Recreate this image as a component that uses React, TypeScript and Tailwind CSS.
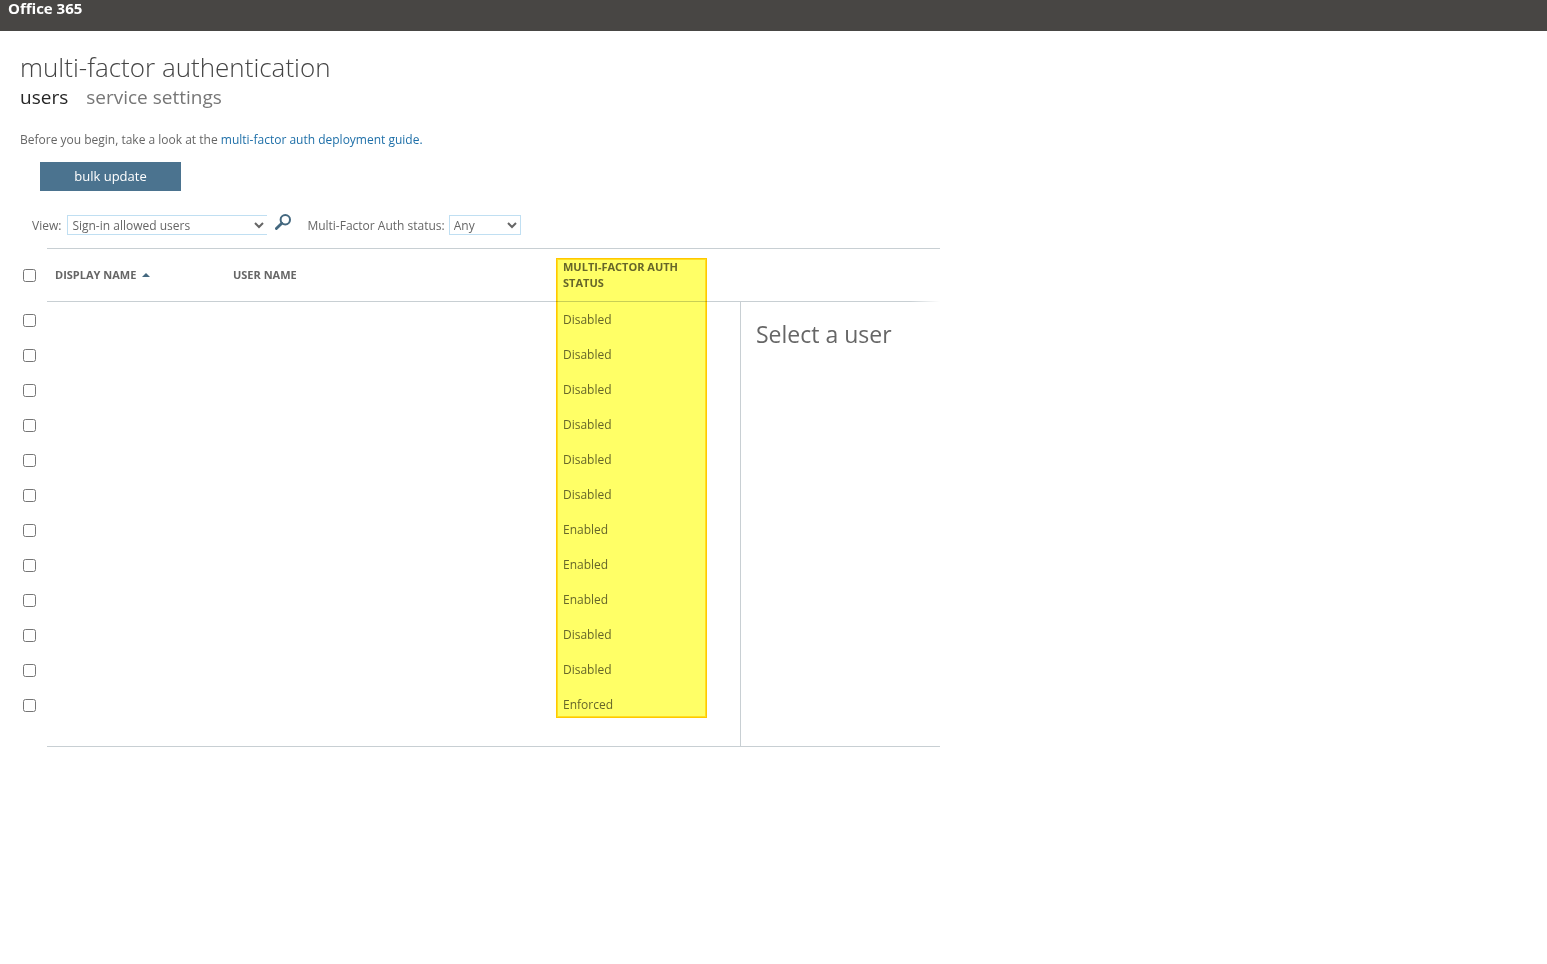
import { useState } from 'react'

const users = [
  { id: 1, status: 'Disabled' },
  { id: 2, status: 'Disabled' },
  { id: 3, status: 'Disabled' },
  { id: 4, status: 'Disabled' },
  { id: 5, status: 'Disabled' },
  { id: 6, status: 'Disabled' },
  { id: 7, status: 'Enabled' },
  { id: 8, status: 'Enabled' },
  { id: 9, status: 'Enabled' },
  { id: 10, status: 'Disabled' },
  { id: 11, status: 'Disabled' },
  { id: 12, status: 'Enforced' },
]

function SearchIcon() {
  return (
    <svg className="h-4 w-4" viewBox="0 0 16 16" fill="none" stroke="#44687f">
      <circle cx="10.3" cy="5.7" r="4.7" strokeWidth="2" />
      <path d="M6.8 9.2L1.4 14.6" strokeWidth="2.8" strokeLinecap="round" />
    </svg>
  )
}

export default function App() {
  const [selected, setSelected] = useState<number[]>([])

  const toggle = (id: number) =>
    setSelected(selected.includes(id) ? selected.filter((s) => s !== id) : [...selected, id])

  const toggleAll = () =>
    setSelected(selected.length === users.length ? [] : users.map((user) => user.id))

  return (
    <div className="min-h-screen bg-white text-xs text-[#666666] font-['Segoe_UI','Open_Sans',sans-serif]">
      {/* Top Bar */}
      <header className="h-[31px] bg-[#484644] px-2">
        <span className="block text-[15px] leading-4 font-bold text-white">Office 365</span>
      </header>

      <main className="max-w-[940px] pl-5 pt-5">
        <h1 className="text-[26px] leading-8 font-light text-[#444444]">multi-factor authentication</h1>
        <nav className="flex gap-[18px] text-[19px] leading-7">
          <a href="#users" className="text-[#262626]">users</a>
          <a href="#settings" className="text-[#777777]">service settings</a>
        </nav>

        <p className="mt-5 leading-[18px]">
          Before you begin, take a look at the{' '}
          <a href="#guide" className="text-[#1e6fa8]">multi-factor auth deployment guide.</a>
        </p>

        <button className="mt-[13px] ml-5 block h-[29px] w-[141px] bg-[#4b738f] text-[13px] text-white">
          bulk update
        </button>

        {/* Filters */}
        <div className="mt-6 ml-3 flex h-5 items-center">
          <label htmlFor="view" className="mr-1.5 pt-0.5">View:</label>
          <select id="view" className="h-5 w-[200px] border border-r-0 border-[#c0dff2]">
            <option>Sign-in allowed users</option>
          </select>
          <button aria-label="Search" className="mr-4 ml-2 pb-1.5">
            <SearchIcon />
          </button>
          <label htmlFor="status" className="mr-1 pt-0.5">Multi-Factor Auth status:</label>
          <select id="status" className="h-5 w-[72px] border border-[#c0dff2]">
            <option>Any</option>
            <option>Enabled</option>
            <option>Enforced</option>
          </select>
        </div>

        {/* Users */}
        <div className="relative mt-[13px]">
          <table className="w-full table-fixed border-separate border-spacing-0 text-left">
            <colgroup>
              <col className="w-[27px]" />
              <col className="w-[178px]" />
              <col className="w-[330px]" />
              <col className="w-[185px]" />
              <col />
            </colgroup>
            <thead>
              <tr className="h-[54px] text-[11px] leading-4">
                <th className="pl-[3px]">
                  <input
                    type="checkbox"
                    aria-label="Select all"
                    className="block h-[13px] w-[13px]"
                    checked={selected.length === users.length}
                    onChange={toggleAll}
                  />
                </th>
                <th className="border-y border-[#c8cfd3] px-2">
                  <span className="flex items-center gap-1.5">
                    DISPLAY NAME
                    <svg className="h-1 w-2" viewBox="0 0 8 4" fill="#44687f">
                      <path d="M4 0L8 4H0z" />
                    </svg>
                  </span>
                </th>
                <th className="border-y border-[#c8cfd3] px-2">USER NAME</th>
                <th className="border-y border-[#c8cfd3] pr-12 pl-2">MULTI-FACTOR AUTH STATUS</th>
                <td className="border-t border-[#c8cfd3] bg-[linear-gradient(to_right,#c8cfd3_85%,#ffffff)] bg-[length:100%_1px] bg-bottom bg-no-repeat"></td>
              </tr>
            </thead>
            <tbody>
              {users.map((user, i) => (
                <tr key={user.id} className="h-[35px]">
                  <td className="pt-0.5 pl-[3px]">
                    <input
                      type="checkbox"
                      aria-label="Select user"
                      className="block h-[13px] w-[13px]"
                      checked={selected.includes(user.id)}
                      onChange={() => toggle(user.id)}
                    />
                  </td>
                  <td></td>
                  <td></td>
                  <td className="px-2">{user.status}</td>
                  {i === 0 && (
                    <td rowSpan={users.length + 1} className="border-b border-l border-[#c8cfd3] px-[15px] pt-4 align-top">
                      <h2 className="text-[23px] leading-8">Select a user</h2>
                    </td>
                  )}
                </tr>
              ))}
              <tr className="h-[25px]">
                <td></td>
                <td colSpan={3} className="border-b border-[#c8cfd3]"></td>
              </tr>
            </tbody>
          </table>

          {/* Status column highlight */}
          <div className="pointer-events-none absolute top-2.5 left-[536px] h-[460px] w-[151px] border border-[#ffc800] bg-[#ffff66] mix-blend-multiply inset-ring-1 inset-ring-[#ffdf20]"></div>
        </div>
      </main>
    </div>
  )
}
